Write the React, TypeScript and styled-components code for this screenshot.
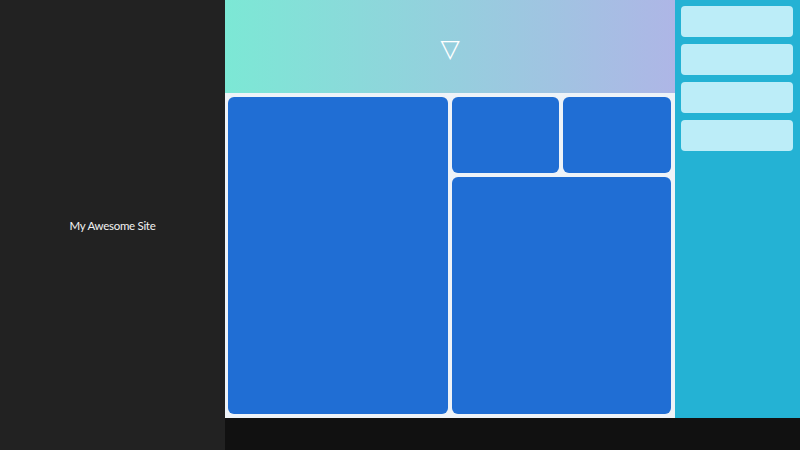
import React from "react";
import styled, { createGlobalStyle } from "styled-components";

const GlobalStyle = createGlobalStyle`
  html,
  body {
    margin: 0;
    padding: 0;
    height: 100%;
    overflow: hidden;
  }

  body {
    font-family: Lato, "Open Sans", sans-serif;
  }
`;

const Layout = styled.div`
  display: grid;
  grid-template-columns: 225px 450px 125px;
  grid-template-rows: 93px 325px 32px;
  grid-template-areas:
    "side head aside"
    "side main aside"
    "side foot foot";
  height: 450px;
  width: 800px;
`;

const Sidebar = styled.nav`
  align-items: center;
  background-color: #222222;
  color: #f2f2f2;
  display: flex;
  font-size: 11.5px;
  grid-area: side;
  justify-content: center;
  letter-spacing: -0.3px;
`;

const Header = styled.header`
  align-items: center;
  background: linear-gradient(90deg, #7ce8d5 0%, #aeb6e6 100%);
  color: #ffffff;
  display: flex;
  grid-area: head;
  justify-content: center;
`;

const Logo = styled.span`
  font-family: "DejaVu Sans", sans-serif;
  font-size: 25px;
  line-height: 1;
  margin-top: 4px;
`;

const Main = styled.main`
  background-color: #eef3f8;
  display: grid;
  gap: 4px;
  grid-area: main;
  grid-template-columns: 220px 107px 108px;
  grid-template-rows: 76px 1fr;
  padding: 4px 4px 4px 3px;
`;

interface CardProps {
  tall?: boolean;
  wide?: boolean;
}

const Card = styled.div<CardProps>`
  background-color: #206ed4;
  border-radius: 6px;
  grid-column: ${props => (props.wide ? "span 2" : "auto")};
  grid-row: ${props => (props.tall ? "span 2" : "auto")};
`;

const Aside = styled.aside`
  background-color: #24b2d4;
  display: flex;
  flex-direction: column;
  gap: 7px;
  grid-area: aside;
  padding: 6px 7px 6px 6px;
`;

const AsideButton = styled.div`
  background-color: #bcedf8;
  border-radius: 4px;
  height: 31px;
`;

const Footer = styled.footer`
  background-color: #111111;
  grid-area: foot;
`;

const App = () => {
  return (
    <>
      <GlobalStyle />
      <Layout>
        <Sidebar>My Awesome Site</Sidebar>
        <Header>
          <Logo>▽</Logo>
        </Header>
        <Main>
          <Card tall />
          <Card />
          <Card />
          <Card wide />
        </Main>
        <Aside>
          <AsideButton />
          <AsideButton />
          <AsideButton />
          <AsideButton />
        </Aside>
        <Footer />
      </Layout>
    </>
  );
};

export default App;
